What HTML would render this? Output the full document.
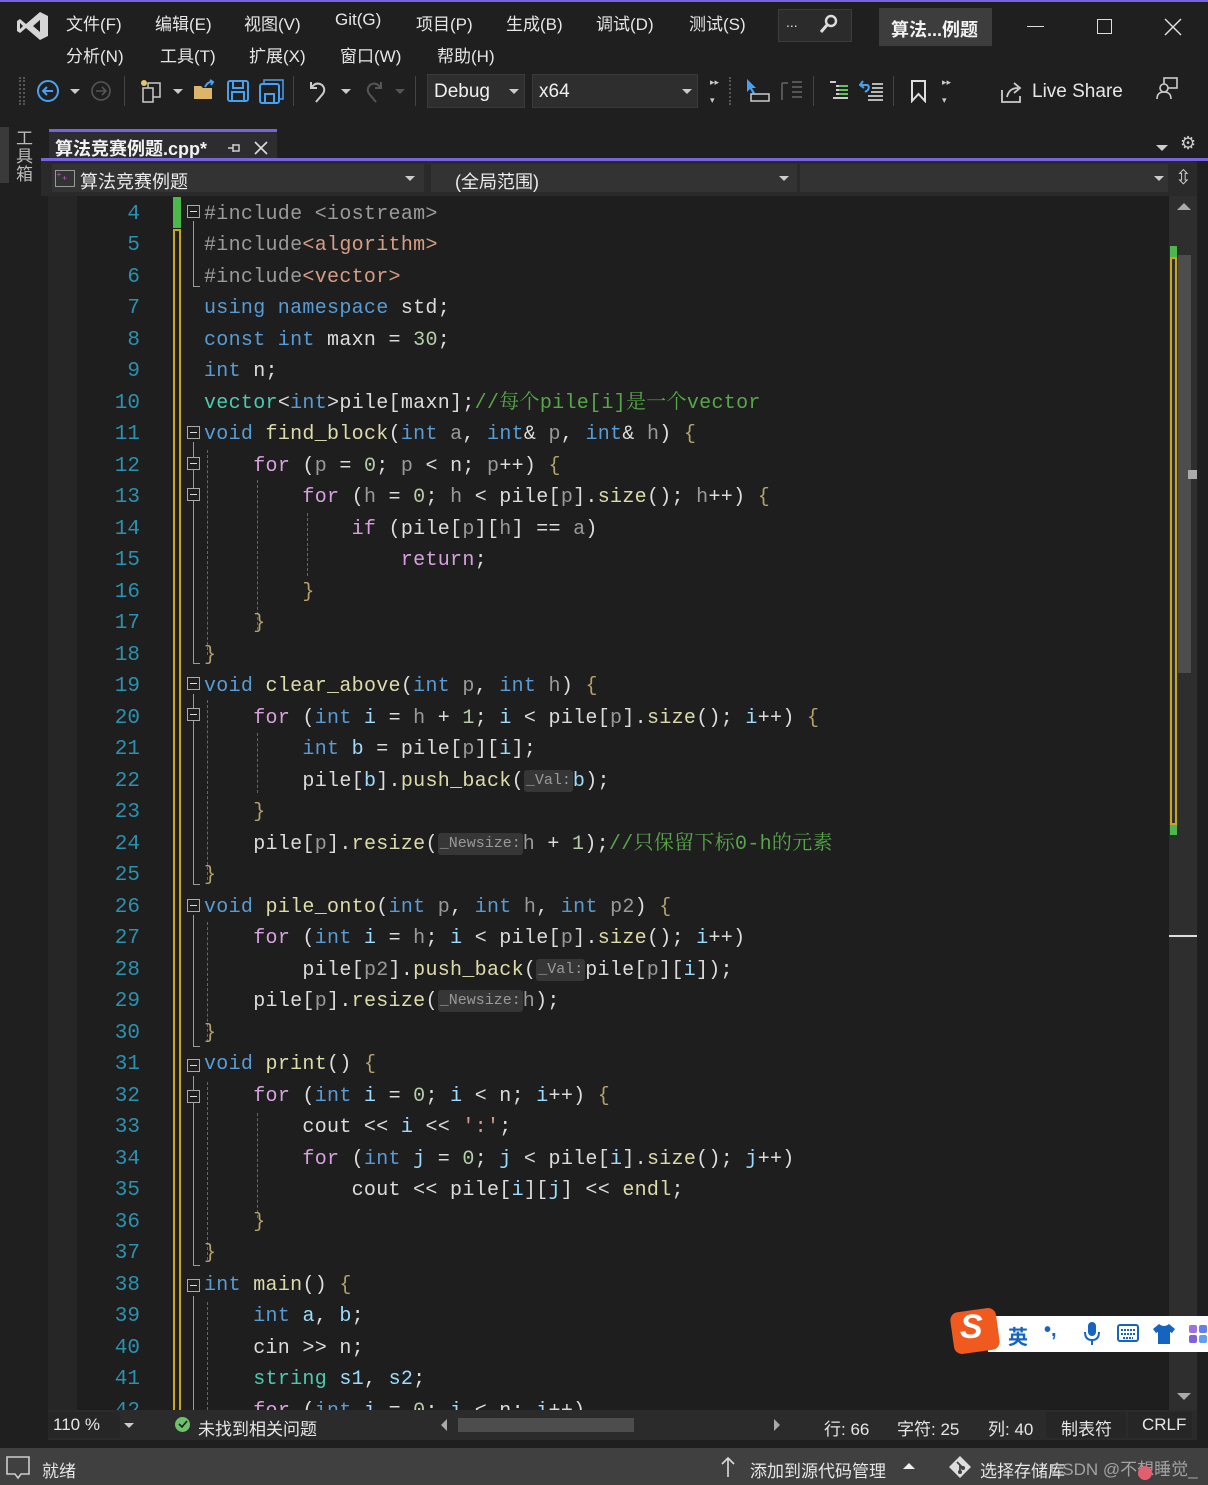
<!DOCTYPE html>
<html><head><meta charset="utf-8">
<style>
*{margin:0;padding:0;box-sizing:border-box}
body{width:1208px;height:1485px;background:#1f1f1f;position:relative;overflow:hidden;font-family:"Liberation Sans","Noto Sans CJK SC",sans-serif;color:#e0e0e0}
.a{position:absolute}
.menu{font-size:17px;color:#e6e6e6;white-space:nowrap}
.code{position:absolute;left:204px;font-family:"Liberation Mono","Noto Serif CJK SC",monospace;font-size:20px;letter-spacing:0.3px;line-height:31px;white-space:pre;color:#dcdcdc}
.ln{position:absolute;left:80px;width:60px;text-align:right;font-family:"Liberation Mono",monospace;font-size:21px;line-height:31px;color:#2b91af}
.k{color:#569cd6}.t{color:#4ec9b0}.c{color:#d8a0df}.f{color:#dcdcaa}.p{color:#9a9a9a}.n{color:#b5cea8}.g{color:#57a64a}.pp{color:#9b9b9b}.s{color:#d69d85}.v{color:#9cdcfe}.b{color:#b5a26a}
.hint{display:inline-block;background:#363636;color:#999;font-size:15px;letter-spacing:0;line-height:22px;padding:0 2px;border-radius:3px;vertical-align:2px}
.fb{position:absolute;left:187px;width:13px;height:13px;border:1px solid #aaa;background:#1e1e1e}
.fb:after{content:"";position:absolute;left:2px;top:5px;width:7px;height:1px;background:#ddd}
.vl{position:absolute;width:1px;background:#9a9a9a}
.dg{position:absolute;width:0;border-left:1px dashed #666}
.sb{font-size:17px;color:#e6e6e6;white-space:nowrap}
</style></head><body>
<div class="a" style="left:0;top:0;width:1208px;height:2px;background:#7564e0"></div>
<svg class="a" style="left:16px;top:10px" width="34" height="32" viewBox="0 0 34 32"><path d="M24 2 L32 6 V26 L24 30 L10 18 L4 23 L1 21 V11 L4 9 L10 14 Z M24 10 L17 16 L24 22 Z M4 13 V19 L7 16 Z" fill="#d6d6d6" fill-rule="evenodd"/></svg>
<div class="a menu" style="left:66px;top:10px">文件(F)</div>
<div class="a menu" style="left:155px;top:10px">编辑(E)</div>
<div class="a menu" style="left:244px;top:10px">视图(V)</div>
<div class="a menu" style="left:335px;top:10px">Git(G)</div>
<div class="a menu" style="left:416px;top:10px">项目(P)</div>
<div class="a menu" style="left:506px;top:10px">生成(B)</div>
<div class="a menu" style="left:596px;top:10px">调试(D)</div>
<div class="a menu" style="left:689px;top:10px">测试(S)</div>
<div class="a menu" style="left:66px;top:42px">分析(N)</div>
<div class="a menu" style="left:160px;top:42px">工具(T)</div>
<div class="a menu" style="left:249px;top:42px">扩展(X)</div>
<div class="a menu" style="left:340px;top:42px">窗口(W)</div>
<div class="a menu" style="left:437px;top:42px">帮助(H)</div>
<div class="a" style="left:778px;top:9px;width:74px;height:33px;background:#2b2b2b;border:1px solid #3c3c3c"></div>
<div class="a" style="left:786px;top:14px;font-size:14px;color:#ddd">...</div>
<svg class="a" style="left:818px;top:13px" width="22" height="22" viewBox="0 0 22 22"><circle cx="13" cy="8" r="5" fill="none" stroke="#ddd" stroke-width="2.4"/><path d="M9 12 L3 19" stroke="#ddd" stroke-width="3"/></svg>
<div class="a" style="left:879px;top:8px;width:113px;height:38px;background:#3d3d3d"></div>
<div class="a" style="left:891px;top:16px;font-size:18px;font-weight:bold;color:#f2f2f2">算法...例题</div>
<div class="a" style="left:1027px;top:26px;width:17px;height:1px;background:#ddd"></div>
<div class="a" style="left:1097px;top:19px;width:15px;height:15px;border:1.5px solid #ddd"></div>
<svg class="a" style="left:1164px;top:18px" width="18" height="18"><path d="M1 1 L17 17 M17 1 L1 17" stroke="#ddd" stroke-width="1.5"/></svg>
<div class="a" style="left:19px;top:77px;width:6px;height:28px;border-left:2px dotted #555;border-right:2px dotted #555"></div>
<svg class="a" style="left:36px;top:79px" width="24" height="24"><circle cx="12" cy="12" r="10" fill="none" stroke="#4aa0f0" stroke-width="2"/><path d="M17 12 H8 M11 8 L7 12 L11 16" stroke="#4aa0f0" stroke-width="2" fill="none"/></svg>
<div class="a" style="left:70px;top:89px;border:5px solid transparent;border-top-color:#ccc"></div>
<svg class="a" style="left:90px;top:80px" width="22" height="22"><circle cx="11" cy="11" r="9" fill="none" stroke="#555" stroke-width="1.6"/><path d="M6 11 H15 M12 7 L16 11 L12 15" stroke="#555" stroke-width="1.6" fill="none"/></svg>
<div class="a" style="left:124px;top:76px;width:1px;height:30px;background:#444"></div>
<svg class="a" style="left:139px;top:78px" width="26" height="26"><rect x="9" y="5" width="12" height="14" fill="none" stroke="#ccc" stroke-width="1.5"/><rect x="4" y="10" width="10" height="14" fill="#1f1f1f" stroke="#ccc" stroke-width="1.5"/><circle cx="5" cy="5" r="3" fill="#e8c56d"/></svg>
<div class="a" style="left:173px;top:89px;border:5px solid transparent;border-top-color:#ccc"></div>
<svg class="a" style="left:192px;top:78px" width="24" height="24"><path d="M2 8 H9 L11 10 H20 V21 H2 Z" fill="#dcb46a"/><path d="M13 9 Q16 3 21 4 M18 2 L21 4 L19 7" stroke="#4aa0f0" stroke-width="2" fill="none"/></svg>
<svg class="a" style="left:226px;top:79px" width="24" height="24"><rect x="2" y="2" width="20" height="20" rx="2" fill="none" stroke="#4aa0f0" stroke-width="2"/><rect x="7" y="2" width="10" height="7" fill="none" stroke="#4aa0f0" stroke-width="2"/><rect x="6" y="13" width="12" height="9" fill="none" stroke="#4aa0f0" stroke-width="2"/></svg>
<svg class="a" style="left:259px;top:79px" width="25" height="25"><rect x="5" y="1" width="19" height="19" fill="none" stroke="#4aa0f0" stroke-width="1.5"/><rect x="1" y="5" width="19" height="19" rx="2" fill="#1f1f1f" stroke="#4aa0f0" stroke-width="2"/><rect x="6" y="15" width="9" height="9" fill="none" stroke="#4aa0f0" stroke-width="2"/></svg>
<div class="a" style="left:293px;top:76px;width:1px;height:30px;background:#444"></div>
<svg class="a" style="left:306px;top:78px" width="24" height="26"><path d="M5 4 V10 H11 M5 10 Q10 3 16 7 Q21 12 15 18 L10 24" stroke="#ccc" stroke-width="2" fill="none"/></svg>
<div class="a" style="left:341px;top:89px;border:5px solid transparent;border-top-color:#ccc"></div>
<svg class="a" style="left:362px;top:78px" width="24" height="26"><path d="M19 4 V10 H13 M19 10 Q14 3 8 7 Q3 12 9 18 L14 24" stroke="#555" stroke-width="2" fill="none"/></svg>
<div class="a" style="left:395px;top:89px;border:5px solid transparent;border-top-color:#555"></div>
<div class="a" style="left:415px;top:76px;width:1px;height:30px;background:#444"></div>
<div class="a" style="left:427px;top:74px;width:98px;height:34px;background:#2e2e2e;border:1px solid #3a3a3a"></div>
<div class="a" style="left:434px;top:81px;font-size:19px;color:#f0f0f0">Debug</div>
<div class="a" style="left:509px;top:89px;border:5px solid transparent;border-top-color:#ccc"></div>
<div class="a" style="left:532px;top:74px;width:166px;height:34px;background:#2e2e2e;border:1px solid #3a3a3a"></div>
<div class="a" style="left:539px;top:81px;font-size:19px;color:#f0f0f0">x64</div>
<div class="a" style="left:682px;top:89px;border:5px solid transparent;border-top-color:#ccc"></div>
<div class="a" style="left:710px;top:78px;font-size:9px;color:#ccc;line-height:9px">▸▸<br><br>▾</div>
<div class="a" style="left:729px;top:77px;width:6px;height:28px;border-left:2px dotted #555"></div>
<svg class="a" style="left:745px;top:78px" width="26" height="26"><path d="M2 1 L2 14 L5 11 L8 16 L10 15 L7 10 L11 10 Z" fill="#4aa0f0"/><rect x="6" y="16" width="18" height="7" fill="none" stroke="#ccc" stroke-width="1.5"/></svg>
<svg class="a" style="left:780px;top:79px" width="24" height="24"><path d="M2 4 H8 M2 4 V21 M12 3 H22 M12 8 H22 M12 13 H22 M12 18 H22" stroke="#555" stroke-width="2"/></svg>
<div class="a" style="left:813px;top:76px;width:1px;height:30px;background:#444"></div>
<svg class="a" style="left:827px;top:78px" width="24" height="24"><path d="M3 4 H9 M9 8 H21 M9 12 H21 M9 16 H21 M6 20 H21" stroke="#ccc" stroke-width="2"/><path d="M12 8 H21 M12 12 H21 M12 16 H21" stroke="#5bc45b" stroke-width="2"/></svg>
<svg class="a" style="left:859px;top:78px" width="26" height="26"><path d="M4 3 L1 7 L5 10 M2 7 H8 Q11 8 9 12 L6 14" stroke="#4aa0f0" stroke-width="2" fill="none"/><path d="M13 6 H24 M13 10 H24 M12 14 H24 M9 18 H24 M9 22 H24" stroke="#ccc" stroke-width="1.8"/></svg>
<div class="a" style="left:893px;top:76px;width:1px;height:30px;background:#444"></div>
<svg class="a" style="left:909px;top:79px" width="20" height="24"><path d="M3 2 H16 V22 L9.5 15 L3 22 Z" fill="none" stroke="#ddd" stroke-width="2"/></svg>
<div class="a" style="left:942px;top:78px;font-size:9px;color:#ccc;line-height:9px">▸▸<br><br>▾</div>
<svg class="a" style="left:1000px;top:80px" width="24" height="24"><path d="M2 10 V22 H20 V16" stroke="#ccc" stroke-width="1.8" fill="none"/><path d="M7 17 Q9 8 18 8 M14 3 L20 8 L14 13" stroke="#ccc" stroke-width="1.8" fill="none"/></svg>
<div class="a" style="left:1032px;top:81px;font-size:19px;color:#e6e6e6">Live Share</div>
<svg class="a" style="left:1155px;top:77px" width="24" height="24"><rect x="9" y="1" width="13" height="10" fill="none" stroke="#ccc" stroke-width="1.6"/><circle cx="9" cy="11" r="4" fill="#1f1f1f" stroke="#ccc" stroke-width="1.6"/><path d="M2 22 Q2 15 9 15 Q16 15 16 22" stroke="#ccc" stroke-width="1.6" fill="none"/></svg>
<div class="a" style="left:0;top:127px;width:9px;height:56px;background:#3a3a3a"></div>
<div class="a" style="left:16px;top:130px;width:20px;font-size:17px;line-height:18px;color:#bbb">工<br>具<br>箱</div>
<div class="a" style="left:49px;top:129px;width:228px;height:30px;background:#2d2d30;border-top:3px solid #7564e0"></div>
<div class="a" style="left:55px;top:135px;font-size:18px;font-weight:bold;color:#f2f2f2">算法竞赛例题.cpp*</div>
<svg class="a" style="left:227px;top:142px" width="14" height="12"><path d="M1 6 H6 M6 2 V10 M6 3 H12 V9 H6" stroke="#ccc" stroke-width="1.5" fill="none"/></svg>
<svg class="a" style="left:254px;top:141px" width="14" height="14"><path d="M1 1 L13 13 M13 1 L1 13" stroke="#ddd" stroke-width="1.6"/></svg>
<div class="a" style="left:1156px;top:145px;border:6px solid transparent;border-top-color:#ccc"></div>
<div class="a" style="left:1180px;top:133px;font-size:18px;color:#ccc">⚙</div>
<div class="a" style="left:41px;top:158px;width:1167px;height:3px;background:#7564e0"></div>
<div class="a" style="left:41px;top:161px;width:1157px;height:35px;background:#2a2a2a"></div>
<div class="a" style="left:52px;top:164px;width:372px;height:28px;background:#333"></div>
<div class="a" style="left:55px;top:170px;width:20px;height:17px;border:1.5px solid #999;font-size:11px;color:#c060d0;line-height:12px">⁺₊</div>
<div class="a" style="left:80px;top:168px;font-size:18px;color:#ececec">算法竞赛例题</div>
<div class="a" style="left:405px;top:176px;border:5px solid transparent;border-top-color:#ccc"></div>
<div class="a" style="left:431px;top:164px;width:366px;height:28px;background:#333"></div>
<div class="a" style="left:455px;top:168px;font-size:18px;color:#ececec">(全局范围)</div>
<div class="a" style="left:779px;top:176px;border:5px solid transparent;border-top-color:#ccc"></div>
<div class="a" style="left:800px;top:164px;width:368px;height:28px;background:#333"></div>
<div class="a" style="left:1154px;top:176px;border:5px solid transparent;border-top-color:#ccc"></div>
<div class="a" style="left:1175px;top:165px;font-size:20px;color:#ccc">⇳</div>
<div class="a" style="left:48px;top:196px;width:1121px;height:1214px;background:#1e1e1e"></div>
<div class="a" style="left:48px;top:196px;width:29px;height:1214px;background:#262626"></div>
<div class="a" style="left:1169px;top:196px;width:28px;height:1214px;background:#2e2e2e"></div>
<div class="a" style="left:1197px;top:161px;width:11px;height:1290px;background:#1f1f1f"></div>
<div class="a" style="left:1177px;top:203px;border:7px solid transparent;border-bottom:7px solid #aaa;border-top:0"></div>
<div class="a" style="left:1177px;top:1393px;border:7px solid transparent;border-top:7px solid #aaa;border-bottom:0"></div>
<div class="a" style="left:1178px;top:255px;width:13px;height:418px;background:#4d4d4d"></div>
<div class="a" style="left:1170px;top:246px;width:7px;height:11px;background:#4cb84c"></div>
<div class="a" style="left:1170px;top:257px;width:7px;height:568px;border:2px solid #c8a818"></div>
<div class="a" style="left:1170px;top:825px;width:7px;height:10px;background:#4cb84c"></div>
<div class="a" style="left:1188px;top:470px;width:9px;height:9px;background:#aaa"></div>
<div class="a" style="left:1169px;top:935px;width:28px;height:2px;background:#ddd"></div>
<div class="a" style="left:173px;top:197px;width:8px;height:31px;background:#4cb84c"></div>
<div class="a" style="left:173px;top:229px;width:8px;height:1181px;border-left:2px solid #c8a818;border-right:2px solid #c8a818"></div>
<div class="a" style="left:173px;top:229px;width:8px;height:2px;background:#c8a818"></div>
<div class="vl" style="left:193px;top:221px;height:66px"></div><div class="a" style="left:193px;top:286px;width:7px;height:1px;background:#9a9a9a"></div>
<div class="vl" style="left:193px;top:442px;height:222px"></div><div class="a" style="left:193px;top:663px;width:7px;height:1px;background:#9a9a9a"></div>
<div class="vl" style="left:193px;top:694px;height:191px"></div><div class="a" style="left:193px;top:884px;width:7px;height:1px;background:#9a9a9a"></div>
<div class="vl" style="left:193px;top:915px;height:132px"></div><div class="a" style="left:193px;top:1046px;width:7px;height:1px;background:#9a9a9a"></div>
<div class="vl" style="left:193px;top:1076px;height:190px"></div><div class="a" style="left:193px;top:1265px;width:7px;height:1px;background:#9a9a9a"></div>
<div class="vl" style="left:193px;top:1296px;height:114px"></div>
<div class="dg" style="left:207px;top:450px;height:205px"></div>
<div class="dg" style="left:257px;top:480px;height:150px"></div>
<div class="dg" style="left:307px;top:513px;height:63px"></div>
<div class="dg" style="left:207px;top:700px;height:180px"></div>
<div class="dg" style="left:257px;top:733px;height:60px"></div>
<div class="dg" style="left:207px;top:922px;height:120px"></div>
<div class="dg" style="left:207px;top:1082px;height:178px"></div>
<div class="dg" style="left:257px;top:1113px;height:105px"></div>
<div class="dg" style="left:207px;top:1302px;height:108px"></div>
<div class="fb" style="top:205px"></div><div class="fb" style="top:426px"></div><div class="fb" style="top:457px"></div><div class="fb" style="top:488px"></div>
<div class="fb" style="top:677px"></div><div class="fb" style="top:708px"></div><div class="fb" style="top:899px"></div>
<div class="fb" style="top:1059px"></div><div class="fb" style="top:1090px"></div><div class="fb" style="top:1279px"></div>
<div class="a" style="left:48px;top:196px;width:1121px;height:1214px;overflow:hidden">
<div style="position:absolute;left:-48px;top:-194px;width:1169px;height:1420px">
<div class="ln" style="top:197px">4</div><div class="code" style="top:197px"><span class="pp">#include &lt;iostream&gt;</span></div>
<div class="ln" style="top:228px">5</div><div class="code" style="top:228px"><span class="pp">#include</span><span class="s">&lt;algorithm&gt;</span></div>
<div class="ln" style="top:260px">6</div><div class="code" style="top:260px"><span class="pp">#include</span><span class="s">&lt;vector&gt;</span></div>
<div class="ln" style="top:291px">7</div><div class="code" style="top:291px"><span class="k">using namespace</span> std;</div>
<div class="ln" style="top:323px">8</div><div class="code" style="top:323px"><span class="k">const int</span> maxn = <span class="n">30</span>;</div>
<div class="ln" style="top:354px">9</div><div class="code" style="top:354px"><span class="k">int</span> n;</div>
<div class="ln" style="top:386px">10</div><div class="code" style="top:386px"><span class="t">vector</span>&lt;<span class="k">int</span>&gt;pile[maxn];<span class="g">//每个pile[i]是一个vector</span></div>
<div class="ln" style="top:417px">11</div><div class="code" style="top:417px"><span class="k">void</span> <span class="f">find_block</span>(<span class="k">int</span> <span class="p">a</span>, <span class="k">int</span>&amp; <span class="p">p</span>, <span class="k">int</span>&amp; <span class="p">h</span>) <span class="b">{</span></div>
<div class="ln" style="top:449px">12</div><div class="code" style="top:449px">    <span class="c">for</span> (<span class="p">p</span> = <span class="n">0</span>; <span class="p">p</span> &lt; n; <span class="p">p</span>++) <span class="b">{</span></div>
<div class="ln" style="top:480px">13</div><div class="code" style="top:480px">        <span class="c">for</span> (<span class="p">h</span> = <span class="n">0</span>; <span class="p">h</span> &lt; pile[<span class="p">p</span>].<span class="f">size</span>(); <span class="p">h</span>++) <span class="b">{</span></div>
<div class="ln" style="top:512px">14</div><div class="code" style="top:512px">            <span class="c">if</span> (pile[<span class="p">p</span>][<span class="p">h</span>] == <span class="p">a</span>)</div>
<div class="ln" style="top:543px">15</div><div class="code" style="top:543px">                <span class="c">return</span>;</div>
<div class="ln" style="top:575px">16</div><div class="code" style="top:575px">        <span class="b">}</span></div>
<div class="ln" style="top:606px">17</div><div class="code" style="top:606px">    <span class="b">}</span></div>
<div class="ln" style="top:638px">18</div><div class="code" style="top:638px"><span class="b">}</span></div>
<div class="ln" style="top:669px">19</div><div class="code" style="top:669px"><span class="k">void</span> <span class="f">clear_above</span>(<span class="k">int</span> <span class="p">p</span>, <span class="k">int</span> <span class="p">h</span>) <span class="b">{</span></div>
<div class="ln" style="top:701px">20</div><div class="code" style="top:701px">    <span class="c">for</span> (<span class="k">int</span> <span class="v">i</span> = <span class="p">h</span> + <span class="n">1</span>; <span class="v">i</span> &lt; pile[<span class="p">p</span>].<span class="f">size</span>(); <span class="v">i</span>++) <span class="b">{</span></div>
<div class="ln" style="top:732px">21</div><div class="code" style="top:732px">        <span class="k">int</span> <span class="v">b</span> = pile[<span class="p">p</span>][<span class="v">i</span>];</div>
<div class="ln" style="top:764px">22</div><div class="code" style="top:764px">        pile[<span class="v">b</span>].<span class="f">push_back</span>(<span class="hint">_Val:</span><span class="v">b</span>);</div>
<div class="ln" style="top:795px">23</div><div class="code" style="top:795px">    <span class="b">}</span></div>
<div class="ln" style="top:827px">24</div><div class="code" style="top:827px">    pile[<span class="p">p</span>].<span class="f">resize</span>(<span class="hint">_Newsize:</span><span class="p">h</span> + <span class="n">1</span>);<span class="g">//只保留下标0-h的元素</span></div>
<div class="ln" style="top:858px">25</div><div class="code" style="top:858px"><span class="b">}</span></div>
<div class="ln" style="top:890px">26</div><div class="code" style="top:890px"><span class="k">void</span> <span class="f">pile_onto</span>(<span class="k">int</span> <span class="p">p</span>, <span class="k">int</span> <span class="p">h</span>, <span class="k">int</span> <span class="p">p2</span>) <span class="b">{</span></div>
<div class="ln" style="top:921px">27</div><div class="code" style="top:921px">    <span class="c">for</span> (<span class="k">int</span> <span class="v">i</span> = <span class="p">h</span>; <span class="v">i</span> &lt; pile[<span class="p">p</span>].<span class="f">size</span>(); <span class="v">i</span>++)</div>
<div class="ln" style="top:953px">28</div><div class="code" style="top:953px">        pile[<span class="p">p2</span>].<span class="f">push_back</span>(<span class="hint">_Val:</span>pile[<span class="p">p</span>][<span class="v">i</span>]);</div>
<div class="ln" style="top:984px">29</div><div class="code" style="top:984px">    pile[<span class="p">p</span>].<span class="f">resize</span>(<span class="hint">_Newsize:</span><span class="p">h</span>);</div>
<div class="ln" style="top:1016px">30</div><div class="code" style="top:1016px"><span class="b">}</span></div>
<div class="ln" style="top:1047px">31</div><div class="code" style="top:1047px"><span class="k">void</span> <span class="f">print</span>() <span class="b">{</span></div>
<div class="ln" style="top:1079px">32</div><div class="code" style="top:1079px">    <span class="c">for</span> (<span class="k">int</span> <span class="v">i</span> = <span class="n">0</span>; <span class="v">i</span> &lt; n; <span class="v">i</span>++) <span class="b">{</span></div>
<div class="ln" style="top:1110px">33</div><div class="code" style="top:1110px">        cout &lt;&lt; <span class="v">i</span> &lt;&lt; <span class="s">':'</span>;</div>
<div class="ln" style="top:1142px">34</div><div class="code" style="top:1142px">        <span class="c">for</span> (<span class="k">int</span> <span class="v">j</span> = <span class="n">0</span>; <span class="v">j</span> &lt; pile[<span class="v">i</span>].<span class="f">size</span>(); <span class="v">j</span>++)</div>
<div class="ln" style="top:1173px">35</div><div class="code" style="top:1173px">            cout &lt;&lt; pile[<span class="v">i</span>][<span class="v">j</span>] &lt;&lt; <span class="f">endl</span>;</div>
<div class="ln" style="top:1205px">36</div><div class="code" style="top:1205px">    <span class="b">}</span></div>
<div class="ln" style="top:1236px">37</div><div class="code" style="top:1236px"><span class="b">}</span></div>
<div class="ln" style="top:1268px">38</div><div class="code" style="top:1268px"><span class="k">int</span> <span class="f">main</span>() <span class="b">{</span></div>
<div class="ln" style="top:1299px">39</div><div class="code" style="top:1299px">    <span class="k">int</span> <span class="v">a</span>, <span class="v">b</span>;</div>
<div class="ln" style="top:1331px">40</div><div class="code" style="top:1331px">    cin &gt;&gt; n;</div>
<div class="ln" style="top:1362px">41</div><div class="code" style="top:1362px">    <span class="t">string</span> <span class="v">s1</span>, <span class="v">s2</span>;</div>
<div class="ln" style="top:1394px">42</div><div class="code" style="top:1394px">    <span class="c">for</span> (<span class="k">int</span> <span class="v">i</span> = <span class="n">0</span>; <span class="v">i</span> &lt; n; <span class="v">i</span>++)</div>
</div></div>
<div class="a" style="left:988px;top:1316px;width:220px;height:36px;background:#fff"></div>
<div class="a" style="left:952px;top:1310px;width:46px;height:42px;background:#f05a1e;border-radius:8px;transform:rotate(-8deg)"></div>
<div class="a" style="left:960px;top:1308px;font-size:34px;font-weight:bold;color:#fff;font-style:italic">S</div>
<div class="a" style="left:1008px;top:1321px;font-size:20px;font-weight:bold;color:#1565c0">英</div>
<div class="a" style="left:1044px;top:1319px;font-size:20px;font-weight:bold;color:#1565c0">•,</div>
<svg class="a" style="left:1082px;top:1321px" width="20" height="26"><rect x="6" y="1" width="8" height="14" rx="4" fill="#1565c0"/><path d="M3 11 Q3 19 10 19 Q17 19 17 11 M10 19 V24" stroke="#1565c0" stroke-width="2" fill="none"/></svg>
<svg class="a" style="left:1117px;top:1324px" width="22" height="18"><rect x="1" y="1" width="20" height="16" rx="2" fill="none" stroke="#1565c0" stroke-width="2"/><path d="M4 6 H18 M4 10 H18 M6 14 H16" stroke="#1565c0" stroke-width="2" stroke-dasharray="2 1"/></svg>
<svg class="a" style="left:1152px;top:1323px" width="24" height="22"><path d="M7 1 L1 6 L4 10 L6 9 V21 H18 V9 L20 10 L23 6 L17 1 Q12 5 7 1 Z" fill="#1565c0"/></svg>
<div class="a" style="left:1189px;top:1325px;width:8px;height:8px;background:#a070e0;border-radius:2px"></div>
<div class="a" style="left:1199px;top:1325px;width:8px;height:8px;background:#6080f0;border-radius:2px"></div>
<div class="a" style="left:1189px;top:1335px;width:8px;height:8px;background:#8060e0;border-radius:2px"></div>
<div class="a" style="left:1199px;top:1335px;width:8px;height:8px;background:#60a0f0;border-radius:2px"></div>
<div class="a" style="left:48px;top:1410px;width:1149px;height:30px;background:#2b2b2b"></div>
<div class="a" style="left:48px;top:1412px;width:72px;height:26px;background:#262626"></div>
<div class="a sb" style="left:53px;top:1415px">110 %</div>
<div class="a" style="left:124px;top:1423px;border:5px solid transparent;border-top-color:#ccc"></div>
<div class="a" style="left:175px;top:1417px;width:15px;height:15px;border-radius:50%;background:#6cc36c"></div>
<svg class="a" style="left:178px;top:1420px" width="10" height="9"><path d="M1 4 L4 7 L9 1" stroke="#1e1e1e" stroke-width="1.6" fill="none"/></svg>
<div class="a sb" style="left:198px;top:1415px">未找到相关问题</div>
<div class="a" style="left:441px;top:1419px;border:6px solid transparent;border-right:6px solid #aaa;border-left:0"></div>
<div class="a" style="left:458px;top:1418px;width:176px;height:14px;background:#4d4d4d"></div>
<div class="a" style="left:774px;top:1419px;border:6px solid transparent;border-left:6px solid #aaa;border-right:0"></div>
<div class="a sb" style="left:824px;top:1415px">行: 66</div>
<div class="a sb" style="left:897px;top:1415px">字符: 25</div>
<div class="a sb" style="left:988px;top:1415px">列: 40</div>
<div class="a" style="left:1046px;top:1412px;width:80px;height:26px;background:#262626"></div>
<div class="a sb" style="left:1061px;top:1415px">制表符</div>
<div class="a" style="left:1128px;top:1412px;width:64px;height:26px;background:#262626"></div>
<div class="a sb" style="left:1142px;top:1415px">CRLF</div>
<div class="a" style="left:0;top:1448px;width:1208px;height:37px;background:#404040"></div>
<svg class="a" style="left:5px;top:1455px" width="28" height="26"><path d="M2 2 H24 V19 H16 L13 23 L10 19 H2 Z" fill="none" stroke="#ccc" stroke-width="1.6"/></svg>
<div class="a sb" style="left:42px;top:1457px">就绪</div>
<svg class="a" style="left:720px;top:1456px" width="16" height="22"><path d="M8 21 V2 M2 8 L8 2 L14 8" stroke="#ddd" stroke-width="1.6" fill="none"/></svg>
<div class="a sb" style="left:750px;top:1457px">添加到源代码管理</div>
<div class="a" style="left:903px;top:1463px;border:6px solid transparent;border-bottom:6px solid #eee;border-top:0"></div>
<svg class="a" style="left:948px;top:1455px" width="24" height="24"><path d="M12 1 L23 12 L12 23 L1 12 Z" fill="#ddd"/><path d="M9 7 L15 13 M12 10 V17" stroke="#404040" stroke-width="1.8"/><circle cx="12" cy="17" r="2" fill="#404040"/><circle cx="15" cy="13" r="2" fill="#404040"/></svg>
<div class="a sb" style="left:980px;top:1457px">选择存储库</div>
<div class="a sb" style="left:1050px;top:1455px;color:#bbb;opacity:.8">CSDN @不想睡觉_</div>
<div class="a" style="left:1138px;top:1466px;width:14px;height:14px;border-radius:50%;background:#e06070"></div>
</body></html>
